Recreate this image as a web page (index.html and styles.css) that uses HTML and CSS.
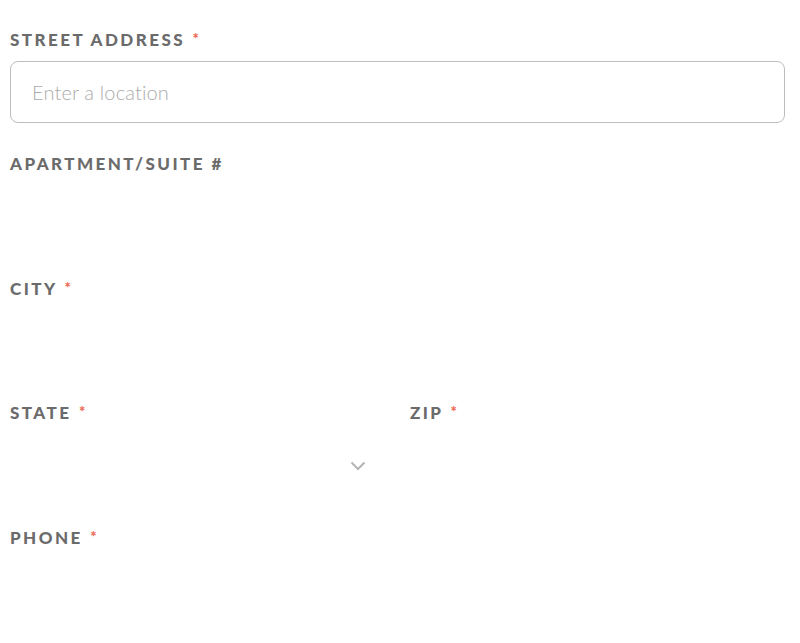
FILE: index.html
```html
<!DOCTYPE html>
<html>
<head>
<meta charset="utf-8">
<link rel="stylesheet" href="styles.css">
</head>
<body>
<form class="form">
  <div class="field">
    <label class="label">Street Address <span class="req">*</span></label>
    <input class="input bordered" type="text" placeholder="Enter a location">
  </div>
  <div class="field">
    <label class="label">Apartment/Suite #</label>
    <input class="input" type="text">
  </div>
  <div class="field">
    <label class="label">City <span class="req">*</span></label>
    <input class="input" type="text">
  </div>
  <div class="row">
    <div class="field">
      <label class="label">State <span class="req">*</span></label>
      <div class="select">
        <svg class="chev" width="16" height="10" viewBox="0 0 16 10"><path d="M1.5 1.5 L8 8 L14.5 1.5" fill="none" stroke="#b5b5b5" stroke-width="2"/></svg>
      </div>
    </div>
    <div class="field">
      <label class="label">Zip <span class="req">*</span></label>
      <input class="input" type="text">
    </div>
  </div>
  <div class="field">
    <label class="label">Phone <span class="req">*</span></label>
    <input class="input" type="text">
  </div>
</form>
</body>
</html>
```
FILE: styles.css
```css
html, body {
  margin: 0;
  padding: 0;
  background: #fff;
}
.form {
  padding: 29.5px 15px 0 10px;
  font-family: Lato, "Open Sans", sans-serif;
}
.field {
  display: flex;
  flex-direction: column;
  margin-bottom: 31px;
}
.row {
  display: grid;
  grid-template-columns: 1fr 1fr;
  column-gap: 25px;
}
.label {
  display: block;
  height: 20px;
  line-height: 20px;
  font-size: 17px;
  font-weight: 900;
  letter-spacing: 2.45px;
  text-transform: uppercase;
  color: #6b6b6b;
  margin-bottom: 11.5px;
}
.req {
  color: #ec6a55;
  font-size: 15px;
  line-height: 0;
  vertical-align: 2px;
  letter-spacing: 0;
  margin-left: 1px;
}
.input {
  box-sizing: border-box;
  height: 62px;
  width: 100%;
  border: 1px solid transparent;
  border-radius: 8px;
  padding: 0 21px;
  font-family: Lato, sans-serif;
  font-weight: 300;
  font-size: 20px;
  letter-spacing: 0.15px;
  color: #555;
  background: transparent;
  outline: none;
}
.input.bordered {
  border-color: #bdbdbd;
}
.input::placeholder {
  color: #ababab;
}
.select {
  position: relative;
  height: 62px;
  display: flex;
  align-items: center;
  justify-content: flex-end;
  padding-right: 19px;
}
.chev {
  display: block;
}
```
